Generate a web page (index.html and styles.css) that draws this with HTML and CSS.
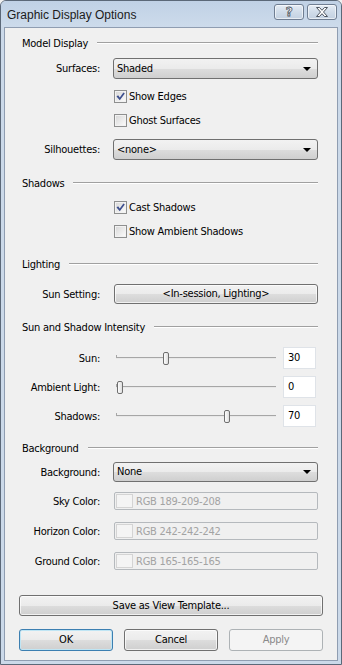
FILE: index.html
```html
<!DOCTYPE html>
<html lang="en">
<head>
  <meta charset="UTF-8">
  <meta name="viewport" content="width=device-width, initial-scale=1.0">
  <title>Graphic Display Options</title>
  <link rel="stylesheet" href="styles.css">
</head>
<body>
  <div class="window">
    <div class="titlebar">
      <span class="title">Graphic Display Options</span>
      <div class="caption-buttons">
        <span class="caption-btn help">?</span>
        <span class="caption-btn close">
          <svg width="16" height="12" viewBox="0 0 16 12">
            <path d="M2.5 1.5h3l2.5 2.8 2.5-2.8h3l-4 4.5 4 4.5h-3l-2.5-2.8-2.5 2.8h-3l4-4.5z" fill="#fff" stroke="#4d5560" stroke-width="1" stroke-linejoin="round"/>
          </svg>
        </span>
      </div>
    </div>

    <div class="client">
      <!-- Model Display -->
      <div class="group-title"><span>Model Display</span></div>
      <div class="row mt-8">
        <label>Surfaces:</label>
        <div class="combo tall">Shaded<i class="arrow"></i></div>
      </div>
      <div class="check-row mt-11">
        <span class="checkbox checked"><svg width="11" height="11" viewBox="0 0 11 11"><path d="M1.5 5.5l1.6-1.2 1.7 2.1 3.6-5 1.4 1-5 6.8z" fill="#3d4f8e"/></svg></span>
        <span>Show Edges</span>
      </div>
      <div class="check-row mt-11">
        <span class="checkbox"></span>
        <span>Ghost Surfaces</span>
      </div>
      <div class="row mt-12">
        <label>Silhouettes:</label>
        <div class="combo tall">&lt;none&gt;<i class="arrow"></i></div>
      </div>

      <!-- Shadows -->
      <div class="group-title mt-16"><span>Shadows</span></div>
      <div class="check-row mt-11">
        <span class="checkbox checked"><svg width="11" height="11" viewBox="0 0 11 11"><path d="M1.5 5.5l1.6-1.2 1.7 2.1 3.6-5 1.4 1-5 6.8z" fill="#3d4f8e"/></svg></span>
        <span>Cast Shadows</span>
      </div>
      <div class="check-row mt-11">
        <span class="checkbox"></span>
        <span>Show Ambient Shadows</span>
      </div>

      <!-- Lighting -->
      <div class="group-title mt-19"><span>Lighting</span></div>
      <div class="row mt-13">
        <label>Sun Setting:</label>
        <div class="button wide">&lt;In-session, Lighting&gt;</div>
      </div>

      <!-- Sun and Shadow Intensity -->
      <div class="group-title mt-16"><span>Sun and Shadow Intensity</span></div>
      <div class="slider-row mt-13">
        <label>Sun:</label>
        <div class="slider"><div class="track"></div><span class="thumb" style="--v:30"></span></div>
        <div class="textbox">30</div>
      </div>
      <div class="slider-row mt-7">
        <label>Ambient Light:</label>
        <div class="slider"><div class="track"></div><span class="thumb" style="--v:0"></span></div>
        <div class="textbox">0</div>
      </div>
      <div class="slider-row mt-7">
        <label>Shadows:</label>
        <div class="slider"><div class="track"></div><span class="thumb" style="--v:70"></span></div>
        <div class="textbox">70</div>
      </div>

      <!-- Background -->
      <div class="group-title mt-14"><span>Background</span></div>
      <div class="row mt-7">
        <label>Background:</label>
        <div class="combo">None<i class="arrow"></i></div>
      </div>
      <div class="row mt-10">
        <label>Sky Color:</label>
        <div class="color-field"><span class="swatch"></span>RGB 189-209-208</div>
      </div>
      <div class="row mt-12">
        <label>Horizon Color:</label>
        <div class="color-field"><span class="swatch"></span>RGB 242-242-242</div>
      </div>
      <div class="row mt-12">
        <label>Ground Color:</label>
        <div class="color-field"><span class="swatch"></span>RGB 165-165-165</div>
      </div>

      <div class="button save">Save as View Template...</div>

      <div class="dialog-buttons">
        <div class="button default">OK</div>
        <div class="button">Cancel</div>
        <div class="button disabled">Apply</div>
      </div>
    </div>
  </div>
</body>
</html>
```

FILE: styles.css
```css
body {
  margin: 0;
  background: #f0f0f0;
  font-family: "DejaVu Sans Condensed", "DejaVu Sans", sans-serif;
  font-stretch: condensed;
  font-size: 11px;
  letter-spacing: -0.25px;
  color: #000;
}

.window {
  width: 342px;
  height: 665px;
  box-sizing: border-box;
  border: 1px solid #5b6878;
  border-radius: 6px 6px 0 0;
  background: #cbd9e9;
  padding: 0 3px 3px;
  display: flex;
  flex-direction: column;
}

.titlebar {
  height: 26px;
  margin: 0 -3px;
  padding: 0 4px 0 6px;
  display: flex;
  align-items: center;
  justify-content: space-between;
  background: linear-gradient(#c0d1e5, #cddbeb);
  border-radius: 5px 5px 0 0;
}

.title {
  font-family: "Liberation Sans", Arial, sans-serif;
  font-stretch: normal;
  font-size: 12px;
  letter-spacing: 0;
  color: #1b1b1b;
  margin-top: 1px;
}

.caption-buttons {
  display: flex;
  gap: 3px;
  align-self: flex-start;
  margin-top: 3px;
}

.caption-btn {
  width: 30px;
  height: 16px;
  box-sizing: border-box;
  border: 1px solid #6f7e92;
  border-radius: 3px;
  background: linear-gradient(#e6edf5, #d0dce9 50%, #c3d1e1);
  box-shadow: inset 0 0 0 1px rgba(255, 255, 255, 0.6);
  display: flex;
  align-items: center;
  justify-content: center;
}

.caption-btn.help {
  font-family: "DejaVu Sans", sans-serif;
  font-stretch: normal;
  font-weight: bold;
  font-size: 12px;
  line-height: 14px;
  color: #fff;
  -webkit-text-stroke: 0.8px #4d5560;
}

.client {
  flex: 1;
  background: #f0f0f0;
  border: 1px solid #8f9db1;
  padding: 8px 14px 0;
}

.mt-7 { margin-top: 7px; }
.mt-8 { margin-top: 8px; }
.mt-10 { margin-top: 10px; }
.mt-11 { margin-top: 11px; }
.mt-12 { margin-top: 12px; }
.mt-13 { margin-top: 13px; }
.mt-14 { margin-top: 14px; }
.mt-16 { margin-top: 16px; }
.mt-19 { margin-top: 19px; }

/* section headings with etched rule */
.group-title {
  display: flex;
  align-items: center;
  height: 14px;
  margin-left: 3px;
  margin-right: 5px;
}

.group-title::after {
  content: "";
  flex: 1;
  margin-left: 9px;
  border-top: 1px solid #a0a0a0;
  border-bottom: 1px solid #ffffff;
}

.row {
  display: grid;
  grid-template-columns: 78px 1fr;
  column-gap: 13px;
  align-items: center;
  margin-left: 3px;
  margin-right: 5px;
}

.row label,
.slider-row label {
  text-align: right;
  white-space: nowrap;
}

.combo {
  position: relative;
  height: 20px;
  box-sizing: border-box;
  border: 1px solid #707070;
  border-radius: 3px;
  background: linear-gradient(#f2f2f2, #ebebeb 50%, #dddddd 51%, #cfcfcf);
  padding-left: 3px;
  line-height: 18px;
}

.combo.tall {
  height: 21px;
  line-height: 19px;
}

.arrow {
  position: absolute;
  right: 6px;
  top: 50%;
  margin-top: -2px;
  border-left: 4px solid transparent;
  border-right: 4px solid transparent;
  border-top: 4px solid #000;
}

.check-row {
  display: flex;
  align-items: center;
  gap: 2px;
  height: 13px;
  margin-left: 95px;
}

.checkbox {
  width: 13px;
  height: 13px;
  box-sizing: border-box;
  border: 1px solid #8e8f8f;
  background: linear-gradient(135deg, #d6d6d6, #fdfdfd);
  box-shadow: inset 0 0 0 1px #f2f2f2;
  display: flex;
  align-items: center;
  justify-content: center;
}

.button {
  height: 21px;
  box-sizing: border-box;
  border: 1px solid #707070;
  border-radius: 3px;
  background: linear-gradient(#f2f2f2, #ebebeb 50%, #dddddd 51%, #cfcfcf);
  box-shadow: inset 0 0 0 1px rgba(255, 255, 255, 0.7);
  text-align: center;
  line-height: 19px;
}

.button.wide {
  height: 20px;
  line-height: 18px;
  margin-left: 1px;
}

.slider-row {
  display: flex;
  align-items: center;
  margin-left: 3px;
  margin-right: 5px;
}

.slider-row label {
  width: 78px;
  margin-right: 13px;
}

.slider {
  position: relative;
  width: 170px;
  height: 22px;
}

.track {
  position: absolute;
  left: 3px;
  right: 7px;
  top: 10px;
  border-top: 1px solid #a6a6a6;
  border-bottom: 1px solid #e8e8e8;
}

.track::before {
  content: "";
  position: absolute;
  left: 0;
  top: -3px;
  height: 3px;
  border-left: 1px solid #a6a6a6;
}

.thumb {
  position: absolute;
  top: 5px;
  left: calc(3.5px + var(--v) * 1.54px);
  width: 6px;
  height: 13px;
  box-sizing: border-box;
  border: 1px solid #6f6f6f;
  border-radius: 2px;
  background: linear-gradient(90deg, #fdfdfd, #dedede);
}

.textbox {
  width: 33px;
  height: 22px;
  box-sizing: border-box;
  border: 1px solid #dfe3e8;
  background: #fff;
  padding-left: 4px;
  line-height: 20px;
}

.color-field {
  height: 18px;
  box-sizing: border-box;
  margin-left: 1px;
  border: 1px solid #b5b9bd;
  border-radius: 2px;
  padding: 1px;
  display: flex;
  align-items: center;
  color: #a3a3a3;
}

.swatch {
  width: 17px;
  height: 14px;
  box-sizing: border-box;
  border: 1px solid #d4d4d4;
  background: #f4f4f4;
  margin-right: 3px;
}

.button.save {
  margin-top: 25px;
}

.dialog-buttons {
  display: flex;
  gap: 11px;
  margin-top: 13px;
}

.dialog-buttons .button {
  flex: 1;
  height: 22px;
  line-height: 20px;
}

.button.default {
  border-color: #3c7fb1;
  box-shadow: inset 0 0 0 1px #bfe5f4;
}

.button.disabled {
  border-color: #adb2b5;
  background: #f4f4f4;
  box-shadow: none;
  color: #8a8a8a;
}
```
